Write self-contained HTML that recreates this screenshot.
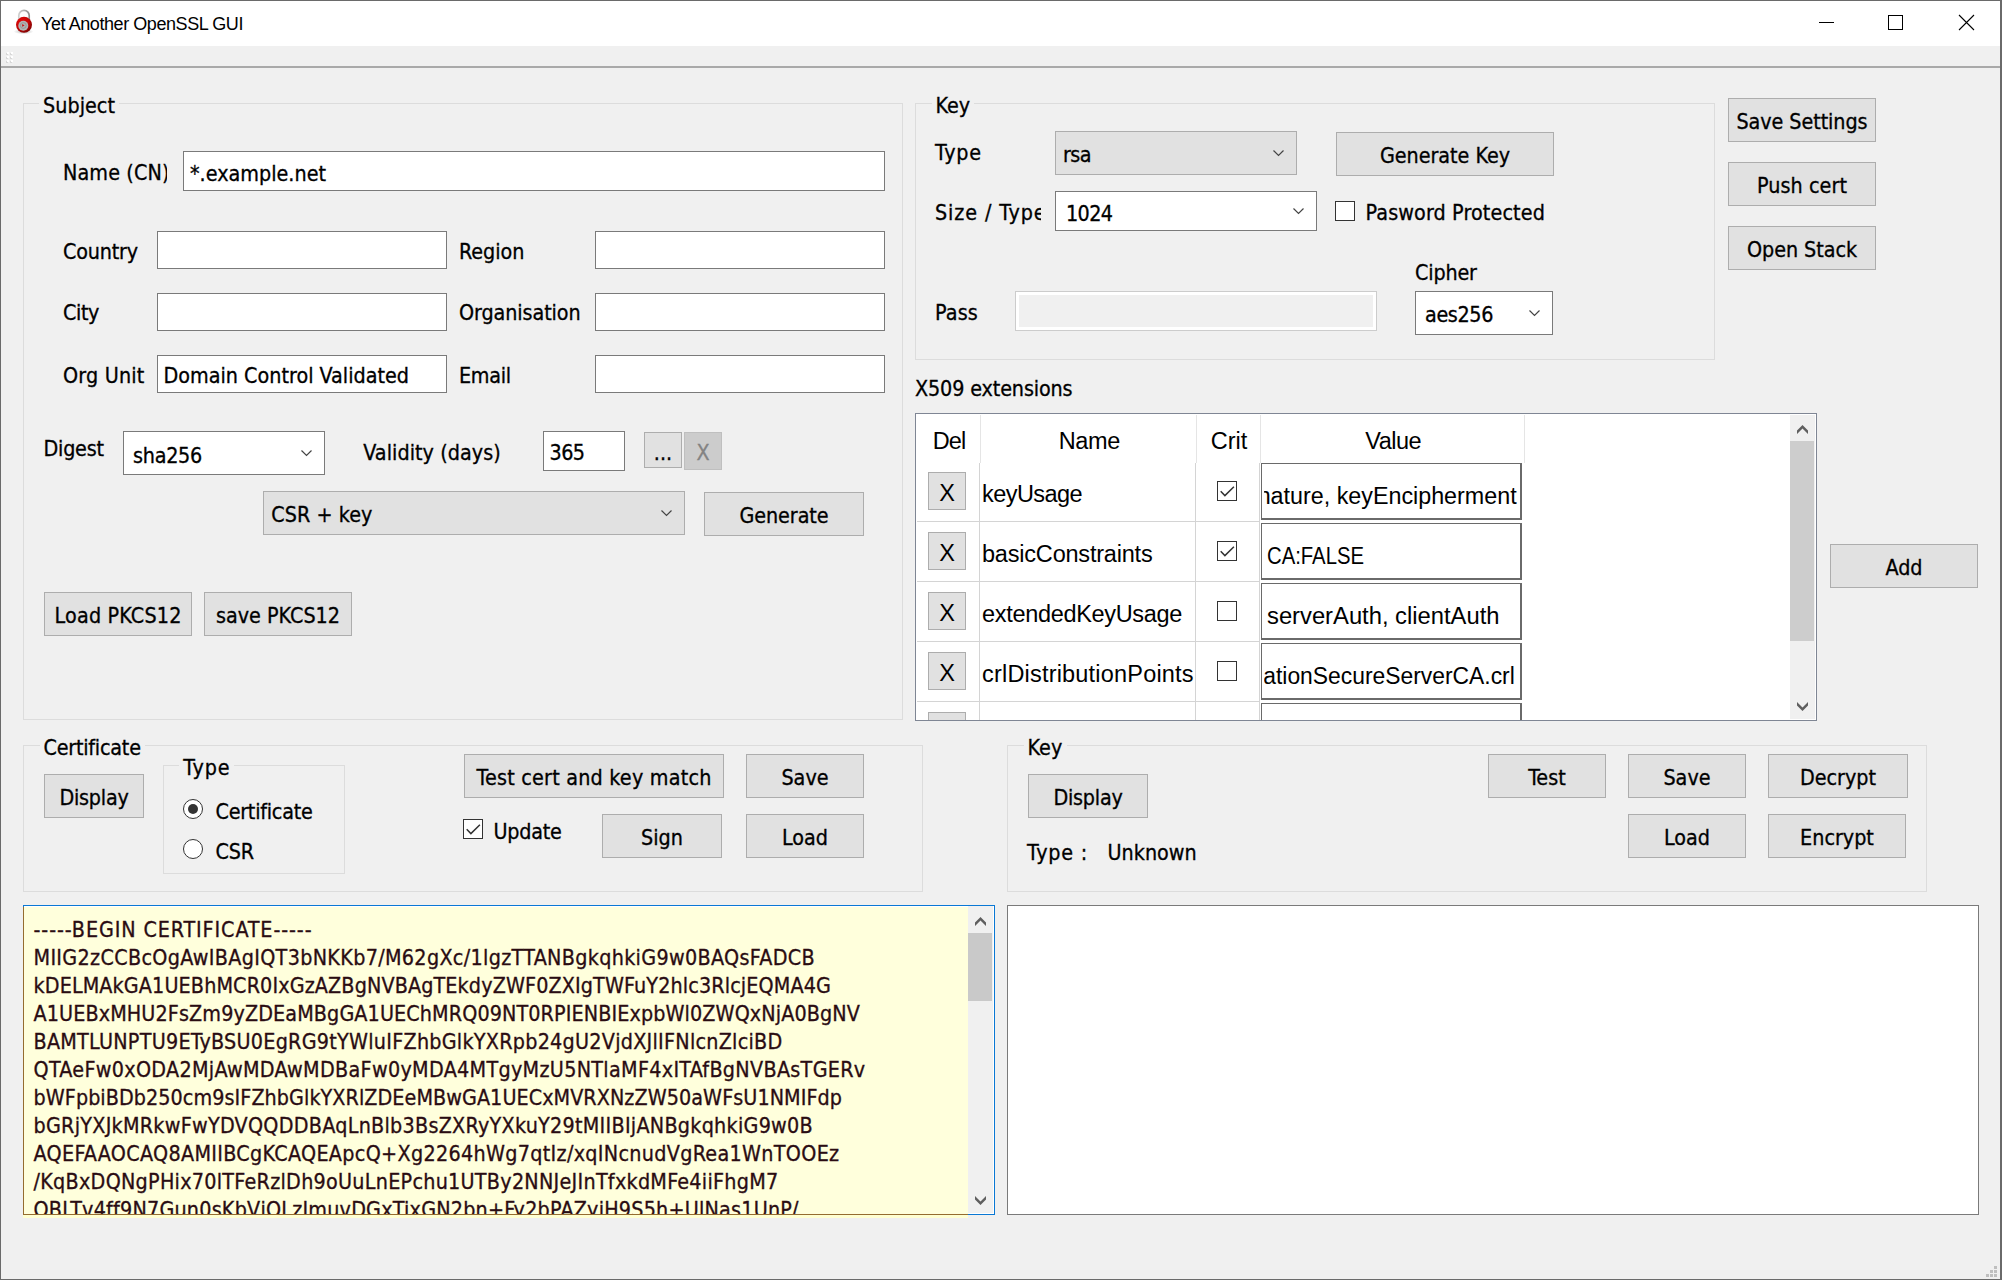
<!DOCTYPE html>
<html lang="en"><head><meta charset="utf-8"><title>Yet Another OpenSSL GUI</title>
<style>
*{box-sizing:border-box;margin:0;padding:0}
html,body{width:2002px;height:1280px;overflow:hidden}
body{position:relative;background:#f0f0f0;color:#000;font-family:'DejaVu Sans Condensed','DejaVu Sans','Liberation Sans',sans-serif;font-size:21.33px;line-height:26px;-webkit-text-stroke:0.3px currentColor;font-stretch:condensed}
.sf{-webkit-text-stroke:0;font-stretch:normal}
.a,.t,.btn,.gb,.in,.cb,.rb,.cmb,.cmw{position:absolute}
.t{white-space:pre;height:26px}
.btn{background:#e1e1e1;border:1px solid #adadad}
.btn.dis{background:#cccccc;border-color:#bfbfbf;color:#838383}
.bl{position:absolute;left:0;right:0;text-align:center;white-space:pre;height:26px}
.gb{border:1px solid #dcdcdc}
.in{background:#fff;border:1px solid #7a7a7a}
.cmb{background:#e1e1e1;border:1px solid #adadad}
.cmw{background:#fff;border:1px solid #7a7a7a}
.cb{background:#fff;border:1px solid #333}
.rb{background:#fff;border:1px solid #333;border-radius:50%}
.rb i{position:absolute;left:4px;top:4px;width:10px;height:10px;border-radius:50%;background:#333}
.vi{position:absolute;background:#fff;border:solid #6a6a6a;border-width:1px 2px 2px 1px;overflow:hidden}
.vi>div{position:absolute;left:2px;right:1px;top:0;bottom:0;overflow:hidden}
.ta{position:absolute;overflow:hidden}
</style></head><body>

<div class="a" style="left:0;top:0;width:2002px;height:46px;background:#fff"></div>
<div class="a" style="left:1px;top:66px;width:2000px;height:2px;background:#a9a9a9"></div>
<div class="a" style="left:7px;top:52px;width:2px;height:2px;background:#fff;box-shadow:-1px 1px 0 #d8d8d8"></div>
<div class="a" style="left:11px;top:52px;width:2px;height:2px;background:#fff;box-shadow:-1px 1px 0 #d8d8d8"></div>
<div class="a" style="left:7px;top:56px;width:2px;height:2px;background:#fff;box-shadow:-1px 1px 0 #d8d8d8"></div>
<div class="a" style="left:11px;top:56px;width:2px;height:2px;background:#fff;box-shadow:-1px 1px 0 #d8d8d8"></div>
<div class="a" style="left:7px;top:60px;width:2px;height:2px;background:#fff;box-shadow:-1px 1px 0 #d8d8d8"></div>
<div class="a" style="left:11px;top:60px;width:2px;height:2px;background:#fff;box-shadow:-1px 1px 0 #d8d8d8"></div>
<svg class="a" style="left:13px;top:8px" width="24" height="28" viewBox="0 0 24 28">
<defs>
<radialGradient id="lr" cx="35%" cy="30%" r="75%"><stop offset="0" stop-color="#e40808"/><stop offset=".6" stop-color="#c40606"/><stop offset="1" stop-color="#7c0303"/></radialGradient>
<linearGradient id="ls" x1="0" x2="1" y1="0" y2="0"><stop offset="0" stop-color="#cfcfcf"/><stop offset="1" stop-color="#8f8f8f"/></linearGradient>
<radialGradient id="lsh" cx="50%" cy="50%" r="50%"><stop offset="0" stop-color="#000" stop-opacity=".28"/><stop offset="1" stop-color="#000" stop-opacity="0"/></radialGradient>
</defs>
<ellipse cx="10.5" cy="23.6" rx="10" ry="2.6" fill="url(#lsh)"/>
<path d="M5.8 12 V7.6 a5.2 5.2 0 0 1 10.4 0 V12" fill="none" stroke="url(#ls)" stroke-width="1.7"/>
<circle cx="11" cy="16.8" r="8" fill="url(#lr)"/>
<circle cx="10.3" cy="17.7" r="5" fill="#b2b4b4"/>
<circle cx="10.3" cy="17.5" r="2.9" fill="none" stroke="#909090" stroke-width=".8"/>
<path d="M9.2 16 l2.4 1.5 -2.4 1.3z" fill="#c81818"/>
</svg>
<div class="t sf" style="left:41px;top:11.00px;font-family:'Liberation Sans',sans-serif;font-size:18px;letter-spacing:-0.427px;">Yet Another OpenSSL GUI</div>
<div class="a" style="left:1819px;top:22px;width:15px;height:1px;background:#000"></div>
<div class="a" style="left:1888px;top:15px;width:15px;height:15px;border:1px solid #000"></div>
<svg class="a" style="left:1958px;top:14px" width="17" height="17" viewBox="0 0 17 17"><path d="M1 1 L16 16 M16 1 L1 16" stroke="#000" stroke-width="1.1" fill="none"/></svg>
<div class="gb" style="left:23px;top:103px;width:880px;height:617px;"></div>
<div class="a" style="left:39px;top:103px;width:80px;height:1px;background:#f0f0f0"></div>
<div class="t" style="left:43px;top:92.50px;letter-spacing:0.036px;">Subject</div>
<div class="t" style="left:63px;top:159.50px;letter-spacing:0.118px;width:104.3px;overflow:hidden;">Name (CN)</div>
<div class="in" style="left:183px;top:151px;width:702px;height:40px;"></div>
<div class="t" style="left:190px;top:160.50px;letter-spacing:0.012px;">*.example.net</div>
<div class="t" style="left:63px;top:238.50px;letter-spacing:-0.176px;">Country</div>
<div class="in" style="left:157px;top:231px;width:290px;height:38px;"></div>
<div class="t" style="left:459px;top:238.50px;letter-spacing:-0.052px;">Region</div>
<div class="in" style="left:595px;top:231px;width:290px;height:38px;"></div>
<div class="t" style="left:63px;top:300.30px;letter-spacing:-0.402px;">City</div>
<div class="in" style="left:157px;top:293px;width:290px;height:38px;"></div>
<div class="t" style="left:459px;top:300.30px;letter-spacing:-0.080px;">Organisation</div>
<div class="in" style="left:595px;top:293px;width:290px;height:38px;"></div>
<div class="t" style="left:63px;top:362.60px;letter-spacing:0.193px;">Org Unit</div>
<div class="in" style="left:157px;top:355px;width:290px;height:38px;"></div>
<div class="t" style="left:459px;top:362.60px;letter-spacing:-0.290px;">Email</div>
<div class="in" style="left:595px;top:355px;width:290px;height:38px;"></div>
<div class="t" style="left:163.5px;top:362.50px;letter-spacing:0.008px;">Domain Control Validated</div>
<div class="t" style="left:43.5px;top:436.00px;letter-spacing:-0.229px;">Digest</div>
<div class="cmw" style="left:123px;top:431px;width:202px;height:44px;"></div>
<div class="t" style="left:133px;top:443.00px;letter-spacing:-0.258px;">sha256</div>
<svg class="a" style="left:300.5px;top:450px" width="11" height="7" viewBox="0 0 11 7"><polyline points="0.5,0.5 5.5,5.5 10.5,0.5" fill="none" stroke="#444" stroke-width="1.2"/></svg>
<div class="t" style="left:363.3px;top:440.00px;letter-spacing:0.057px;">Validity (days)</div>
<div class="in" style="left:543px;top:431px;width:82px;height:40px;"></div>
<div class="t" style="left:549.5px;top:440.00px;letter-spacing:-0.542px;">365</div>
<div class="btn" style="left:644px;top:432px;width:38px;height:36px;"><span class="bl" style="top:6.50px;">...</span></div>
<div class="btn dis" style="left:684px;top:432px;width:38px;height:38px;"><span class="bl" style="top:7.00px;">X</span></div>
<div class="cmb" style="left:263px;top:491px;width:422px;height:44px;"></div>
<div class="t" style="left:271.3px;top:501.75px;letter-spacing:0.055px;">CSR + key</div>
<svg class="a" style="left:660.5px;top:510px" width="11" height="7" viewBox="0 0 11 7"><polyline points="0.5,0.5 5.5,5.5 10.5,0.5" fill="none" stroke="#444" stroke-width="1.2"/></svg>
<div class="btn" style="left:704px;top:492px;width:160px;height:44px;"><span class="bl" style="top:9.50px;letter-spacing:-0.078px;padding-left:-0.078px;">Generate</span></div>
<div class="btn" style="left:44px;top:592px;width:148px;height:44px;"><span class="bl" style="top:9.50px;letter-spacing:0.175px;padding-left:0.175px;">Load PKCS12</span></div>
<div class="btn" style="left:204px;top:592px;width:148px;height:44px;"><span class="bl" style="top:9.50px;letter-spacing:0.000px;padding-left:0.000px;">save PKCS12</span></div>
<div class="gb" style="left:915px;top:103px;width:800px;height:257px;"></div>
<div class="a" style="left:931.5px;top:103px;width:42.5px;height:1px;background:#f0f0f0"></div>
<div class="t" style="left:935.5px;top:92.50px;letter-spacing:-0.062px;">Key</div>
<div class="t" style="left:935px;top:140.00px;letter-spacing:0.812px;">Type</div>
<div class="cmb" style="left:1055px;top:131px;width:242px;height:44px;"></div>
<div class="t" style="left:1063px;top:142.00px;letter-spacing:-0.547px;">rsa</div>
<svg class="a" style="left:1272.5px;top:150px" width="11" height="7" viewBox="0 0 11 7"><polyline points="0.5,0.5 5.5,5.5 10.5,0.5" fill="none" stroke="#444" stroke-width="1.2"/></svg>
<div class="btn" style="left:1336px;top:132px;width:218px;height:44px;"><span class="bl" style="top:10.00px;letter-spacing:-0.034px;padding-left:-0.034px;">Generate Key</span></div>
<div class="t" style="left:935px;top:200.00px;letter-spacing:0.882px;width:106.3px;overflow:hidden;">Size / Type</div>
<div class="cmw" style="left:1055px;top:191px;width:262px;height:40px;"></div>
<div class="t" style="left:1066px;top:201.00px;letter-spacing:-0.582px;">1024</div>
<svg class="a" style="left:1292.5px;top:208px" width="11" height="7" viewBox="0 0 11 7"><polyline points="0.5,0.5 5.5,5.5 10.5,0.5" fill="none" stroke="#444" stroke-width="1.2"/></svg>
<div class="cb" style="left:1335px;top:201px;width:20px;height:20px;"></div>
<div class="t" style="left:1365.5px;top:199.50px;letter-spacing:0.128px;">Pasword Protected</div>
<div class="t" style="left:935px;top:300.00px;letter-spacing:0.156px;">Pass</div>
<div class="a" style="left:1015px;top:291px;width:362px;height:40px;background:#f0f0f0;border:1px solid #ccc;box-shadow:inset 0 0 0 3px #fff"></div>
<div class="t" style="left:1415px;top:260.00px;letter-spacing:-0.172px;">Cipher</div>
<div class="cmw" style="left:1415px;top:291px;width:138px;height:44px;"></div>
<div class="t" style="left:1425px;top:302.00px;letter-spacing:-0.365px;">aes256</div>
<svg class="a" style="left:1529px;top:310px" width="11" height="7" viewBox="0 0 11 7"><polyline points="0.5,0.5 5.5,5.5 10.5,0.5" fill="none" stroke="#444" stroke-width="1.2"/></svg>
<div class="btn" style="left:1728px;top:98px;width:148px;height:44px;"><span class="bl" style="top:9.75px;letter-spacing:-0.070px;padding-left:-0.070px;">Save Settings</span></div>
<div class="btn" style="left:1728px;top:162px;width:148px;height:44px;"><span class="bl" style="top:10.00px;letter-spacing:0.069px;padding-left:0.069px;">Push cert</span></div>
<div class="btn" style="left:1728px;top:226px;width:148px;height:44px;"><span class="bl" style="top:9.75px;letter-spacing:-0.048px;padding-left:-0.048px;">Open Stack</span></div>
<div class="t" style="left:915px;top:376.00px;letter-spacing:-0.124px;">X509 extensions</div>
<div class="a" style="left:915px;top:413px;width:902px;height:308px;background:#fff;border:1px solid #7f8694"></div>
<div class="a" style="left:980px;top:415px;width:1px;height:48px;background:#e5e5e5"></div>
<div class="a" style="left:1196px;top:415px;width:1px;height:48px;background:#e5e5e5"></div>
<div class="a" style="left:1260px;top:415px;width:1px;height:48px;background:#e5e5e5"></div>
<div class="a" style="left:1524px;top:415px;width:1px;height:48px;background:#e5e5e5"></div>
<div class="t sf" style="left:932.8px;top:428.40px;font-family:'Liberation Sans',sans-serif;font-size:23.5px;letter-spacing:-0.922px;">Del</div>
<div class="t sf" style="left:1058.75px;top:428.40px;font-family:'Liberation Sans',sans-serif;font-size:23.5px;letter-spacing:-0.359px;">Name</div>
<div class="t sf" style="left:1210.7px;top:428.40px;font-family:'Liberation Sans',sans-serif;font-size:23.5px;letter-spacing:-0.012px;">Crit</div>
<div class="t sf" style="left:1365.3px;top:428.40px;font-family:'Liberation Sans',sans-serif;font-size:23.5px;letter-spacing:-0.515px;">Value</div>
<div class="a" style="left:979px;top:463px;width:1px;height:257px;background:#d4d4d4"></div>
<div class="a" style="left:1195px;top:463px;width:1px;height:257px;background:#d4d4d4"></div>
<div class="a" style="left:1259px;top:463px;width:1px;height:257px;background:#d4d4d4"></div>
<div class="a" style="left:917px;top:521px;width:343px;height:1px;background:#d4d4d4"></div>
<div class="a" style="left:917px;top:581px;width:343px;height:1px;background:#d4d4d4"></div>
<div class="a" style="left:917px;top:641px;width:343px;height:1px;background:#d4d4d4"></div>
<div class="a" style="left:917px;top:701px;width:343px;height:1px;background:#d4d4d4"></div>
<div class="btn" style="left:928px;top:472px;width:38px;height:38px;"><span class="bl" style="top:6.70px;font-family:'Liberation Sans',sans-serif;-webkit-text-stroke:0;font-stretch:normal;font-size:23.5px;">X</span></div>
<div class="t sf" style="left:982px;top:481.20px;font-family:'Liberation Sans',sans-serif;font-size:23.5px;letter-spacing:-0.562px;">keyUsage</div>
<div class="cb" style="left:1217px;top:481px;width:20px;height:20px;"><svg width="18" height="18" viewBox="0 0 18 18" style="position:absolute;left:0;top:0"><polyline points="2.7,9.3 6.9,13.6 15.9,4.7" fill="none" stroke="#333" stroke-width="1.5"/></svg></div>
<div class="vi" style="left:1261px;top:463px;width:261px;height:57px"><div><div class="t sf" style="right:2px;transform-origin:100% 0;top:18.50px;font-family:'Liberation Sans',sans-serif;font-size:23.5px;transform:scaleX(0.9913)">digitalSignature, keyEncipherment</div></div></div>
<div class="btn" style="left:928px;top:532px;width:38px;height:38px;"><span class="bl" style="top:6.70px;font-family:'Liberation Sans',sans-serif;-webkit-text-stroke:0;font-stretch:normal;font-size:23.5px;">X</span></div>
<div class="t sf" style="left:982px;top:541.20px;font-family:'Liberation Sans',sans-serif;font-size:23.5px;letter-spacing:-0.201px;">basicConstraints</div>
<div class="cb" style="left:1217px;top:541px;width:20px;height:20px;"><svg width="18" height="18" viewBox="0 0 18 18" style="position:absolute;left:0;top:0"><polyline points="2.7,9.3 6.9,13.6 15.9,4.7" fill="none" stroke="#333" stroke-width="1.5"/></svg></div>
<div class="vi" style="left:1261px;top:523px;width:261px;height:57px"><div><div class="t sf" style="left:3px;transform-origin:0 0;top:18.50px;font-family:'Liberation Sans',sans-serif;font-size:23.5px;transform:scaleX(0.8635)">CA:FALSE</div></div></div>
<div class="btn" style="left:928px;top:592px;width:38px;height:38px;"><span class="bl" style="top:6.70px;font-family:'Liberation Sans',sans-serif;-webkit-text-stroke:0;font-stretch:normal;font-size:23.5px;">X</span></div>
<div class="t sf" style="left:982px;top:601.20px;font-family:'Liberation Sans',sans-serif;font-size:23.5px;letter-spacing:-0.320px;">extendedKeyUsage</div>
<div class="cb" style="left:1217px;top:601px;width:20px;height:20px;"></div>
<div class="vi" style="left:1261px;top:583px;width:261px;height:57px"><div><div class="t sf" style="left:3px;transform-origin:0 0;top:18.50px;font-family:'Liberation Sans',sans-serif;font-size:23.5px;transform:scaleX(1.0113)">serverAuth, clientAuth</div></div></div>
<div class="btn" style="left:928px;top:652px;width:38px;height:38px;"><span class="bl" style="top:6.70px;font-family:'Liberation Sans',sans-serif;-webkit-text-stroke:0;font-stretch:normal;font-size:23.5px;">X</span></div>
<div class="t sf" style="left:982px;top:661.20px;font-family:'Liberation Sans',sans-serif;font-size:23.5px;letter-spacing:0.195px;">crlDistributionPoints</div>
<div class="cb" style="left:1217px;top:661px;width:20px;height:20px;"></div>
<div class="vi" style="left:1261px;top:643px;width:261px;height:57px"><div><div class="t sf" style="right:3.8px;transform-origin:100% 0;top:18.50px;font-family:'Liberation Sans',sans-serif;font-size:23.5px;transform:scaleX(0.9725)">COMODORSADomainValidationSecureServerCA.crl</div></div></div>
<div class="a" style="left:928px;top:712px;width:38px;height:8px;background:#e1e1e1;border:1px solid #adadad;border-bottom:0"></div>
<div class="vi" style="left:1261px;top:703px;width:261px;height:17px;border-bottom:0"></div>
<div class="a" style="left:1790px;top:415px;width:25px;height:304px;background:#f0f0f0"></div>
<div class="a" style="left:1790px;top:441px;width:24px;height:200px;background:#cdcdcd"></div>
<svg class="a" style="left:1797px;top:425px" width="11" height="9" viewBox="0 0 11 9"><polygon points="5.5,0 11,5.5 11,9 5.5,3.5 0,9 0,5.5" fill="#5f5f5f"/></svg>
<svg class="a" style="left:1797px;top:702px" width="11" height="9" viewBox="0 0 11 9"><polygon points="0,0 5.5,5.5 11,0 11,3.5 5.5,9 0,3.5" fill="#5f5f5f"/></svg>
<div class="btn" style="left:1830px;top:544px;width:148px;height:44px;"><span class="bl" style="top:9.75px;">Add</span></div>
<div class="gb" style="left:23px;top:745px;width:900px;height:147px;"></div>
<div class="a" style="left:39.5px;top:745px;width:105.25px;height:1px;background:#f0f0f0"></div>
<div class="t" style="left:43.5px;top:734.50px;letter-spacing:-0.222px;">Certificate</div>
<div class="btn" style="left:44px;top:774px;width:100px;height:44px;"><span class="bl" style="top:10.00px;letter-spacing:-0.248px;padding-left:-0.248px;">Display</span></div>
<div class="gb" style="left:163px;top:765px;width:182px;height:109px;"></div>
<div class="a" style="left:179.3px;top:765px;width:55.2px;height:1px;background:#f0f0f0"></div>
<div class="t" style="left:183.3px;top:755.00px;letter-spacing:0.862px;">Type</div>
<div class="rb" style="left:183px;top:799px;width:20px;height:20px;"><i></i></div>
<div class="t" style="left:215.5px;top:798.75px;letter-spacing:-0.244px;">Certificate</div>
<div class="rb" style="left:183px;top:839px;width:20px;height:20px;"></div>
<div class="t" style="left:215.5px;top:838.75px;letter-spacing:-0.224px;">CSR</div>
<div class="btn" style="left:464px;top:754px;width:260px;height:44px;"><span class="bl" style="top:10.00px;letter-spacing:0.224px;padding-left:0.224px;">Test cert and key match</span></div>
<div class="btn" style="left:746px;top:754px;width:118px;height:44px;"><span class="bl" style="top:10.00px;">Save</span></div>
<div class="cb" style="left:463px;top:819px;width:20px;height:20px;"><svg width="18" height="18" viewBox="0 0 18 18" style="position:absolute;left:0;top:0"><polyline points="2.7,9.3 6.9,13.6 15.9,4.7" fill="none" stroke="#333" stroke-width="1.5"/></svg></div>
<div class="t" style="left:493.4px;top:819.00px;letter-spacing:-0.203px;">Update</div>
<div class="btn" style="left:602px;top:814px;width:120px;height:44px;"><span class="bl" style="top:10.00px;">Sign</span></div>
<div class="btn" style="left:746px;top:814px;width:118px;height:44px;"><span class="bl" style="top:10.00px;">Load</span></div>
<div class="gb" style="left:1007px;top:745px;width:920px;height:147px;"></div>
<div class="a" style="left:1023.5px;top:745px;width:43px;height:1px;background:#f0f0f0"></div>
<div class="t" style="left:1027.5px;top:734.50px;letter-spacing:0.104px;">Key</div>
<div class="btn" style="left:1028px;top:774px;width:120px;height:44px;"><span class="bl" style="top:10.00px;letter-spacing:-0.248px;padding-left:-0.248px;">Display</span></div>
<div class="t" style="left:1027px;top:840.00px;letter-spacing:0.781px;">Type :</div>
<div class="t" style="left:1107.5px;top:840.00px;letter-spacing:0.022px;">Unknown</div>
<div class="btn" style="left:1488px;top:754px;width:118px;height:44px;"><span class="bl" style="top:10.00px;">Test</span></div>
<div class="btn" style="left:1628px;top:754px;width:118px;height:44px;"><span class="bl" style="top:10.00px;">Save</span></div>
<div class="btn" style="left:1768px;top:754px;width:140px;height:44px;"><span class="bl" style="top:10.00px;">Decrypt</span></div>
<div class="btn" style="left:1628px;top:814px;width:118px;height:44px;"><span class="bl" style="top:10.00px;">Load</span></div>
<div class="btn" style="left:1768px;top:814px;width:138px;height:44px;"><span class="bl" style="top:10.00px;">Encrypt</span></div>
<div class="ta" style="left:23px;top:905px;width:972px;height:310px;background:#fff;color:#2a0c12">
<div class="a" style="left:1px;top:2px;width:944px;height:307px;background:#ffffdc"></div>
<div class="t" style="left:10.5px;top:11.50px;letter-spacing:0.895px">-----BEGIN CERTIFICATE-----</div>
<div class="t" style="left:10.5px;top:39.50px;letter-spacing:0.322px">MIIG2zCCBcOgAwIBAgIQT3bNKKb7/M62gXc/1lgzTTANBgkqhkiG9w0BAQsFADCB</div>
<div class="t" style="left:10.5px;top:67.50px;letter-spacing:0.124px">kDELMAkGA1UEBhMCR0IxGzAZBgNVBAgTEkdyZWF0ZXIgTWFuY2hlc3RlcjEQMA4G</div>
<div class="t" style="left:10.5px;top:95.50px;letter-spacing:0.108px">A1UEBxMHU2FsZm9yZDEaMBgGA1UEChMRQ09NT0RPIENBIExpbWl0ZWQxNjA0BgNV</div>
<div class="t" style="left:10.5px;top:123.50px;letter-spacing:0.255px">BAMTLUNPTU9ETyBSU0EgRG9tYWluIFZhbGlkYXRpb24gU2VjdXJlIFNlcnZlciBD</div>
<div class="t" style="left:10.5px;top:151.50px;letter-spacing:0.301px">QTAeFw0xODA2MjAwMDAwMDBaFw0yMDA4MTgyMzU5NTlaMF4xITAfBgNVBAsTGERv</div>
<div class="t" style="left:10.5px;top:179.50px;letter-spacing:0.061px">bWFpbiBDb250cm9sIFZhbGlkYXRlZDEeMBwGA1UECxMVRXNzZW50aWFsU1NMIFdp</div>
<div class="t" style="left:10.5px;top:207.50px;letter-spacing:0.264px">bGRjYXJkMRkwFwYDVQQDDBAqLnBlb3BsZXRyYXkuY29tMIIBIjANBgkqhkiG9w0B</div>
<div class="t" style="left:10.5px;top:235.50px;letter-spacing:0.310px">AQEFAAOCAQ8AMIIBCgKCAQEApcQ+Xg2264hWg7qtIz/xqINcnudVgRea1WnTOOEz</div>
<div class="t" style="left:10.5px;top:263.50px;letter-spacing:0.267px">/KqBxDQNgPHix70lTFeRzlDh9oUuLnEPchu1UTBy2NNJeJInTfxkdMFe4iiFhgM7</div>
<div class="t" style="left:10.5px;top:291.50px;letter-spacing:0.213px">OBLTv4ff9N7Gun0sKbVjOLzImuvDGxTixGN2bn+Fy2bPAZyjH9S5h+UlNas1UnP/</div>
<div class="a" style="left:945px;top:1px;width:25px;height:307px;background:#f0f0f0"></div>
<div class="a" style="left:945px;top:28px;width:24px;height:68px;background:#c9c9c9"></div>
<div class="a" style="left:0;top:0;width:972px;height:1px;background:#0a78d4"></div>
<div class="a" style="left:971px;top:0;width:1px;height:310px;background:#0a78d4"></div>
<div class="a" style="left:0;top:0;width:1px;height:2px;background:#0a78d4"></div>
<div class="a" style="left:0;top:2px;width:1px;height:308px;background:#946c30"></div>
<div class="a" style="left:0;top:309px;width:945px;height:1px;background:#946c30"></div>
<div class="a" style="left:945px;top:309px;width:27px;height:1px;background:#0a78d4"></div>
</div>
<div class="a" style="left:23px;top:1215px;width:945px;height:3px;background:#ffffd2"></div>
<svg class="a" style="left:975px;top:917px" width="11" height="9" viewBox="0 0 11 9"><polygon points="5.5,0 11,5.5 11,9 5.5,3.5 0,9 0,5.5" fill="#5f5f5f"/></svg>
<svg class="a" style="left:975px;top:1196px" width="11" height="9" viewBox="0 0 11 9"><polygon points="0,0 5.5,5.5 11,0 11,3.5 5.5,9 0,3.5" fill="#5f5f5f"/></svg>
<div class="ta" style="left:1007px;top:905px;width:972px;height:310px;background:#fff;border:1px solid #7a7a7a"></div>
<div class="a" style="left:1994px;top:1266px;width:3px;height:3px;background:#bfbfbf"></div>
<div class="a" style="left:1990px;top:1270px;width:3px;height:3px;background:#bfbfbf"></div>
<div class="a" style="left:1994px;top:1270px;width:3px;height:3px;background:#bfbfbf"></div>
<div class="a" style="left:1986px;top:1274px;width:3px;height:3px;background:#bfbfbf"></div>
<div class="a" style="left:1990px;top:1274px;width:3px;height:3px;background:#bfbfbf"></div>
<div class="a" style="left:1994px;top:1274px;width:3px;height:3px;background:#bfbfbf"></div>
<div class="a" style="left:0;top:0;width:2002px;height:1280px;border:1px solid #6a6a6a;border-right-width:2px;pointer-events:none"></div>
</body></html>
